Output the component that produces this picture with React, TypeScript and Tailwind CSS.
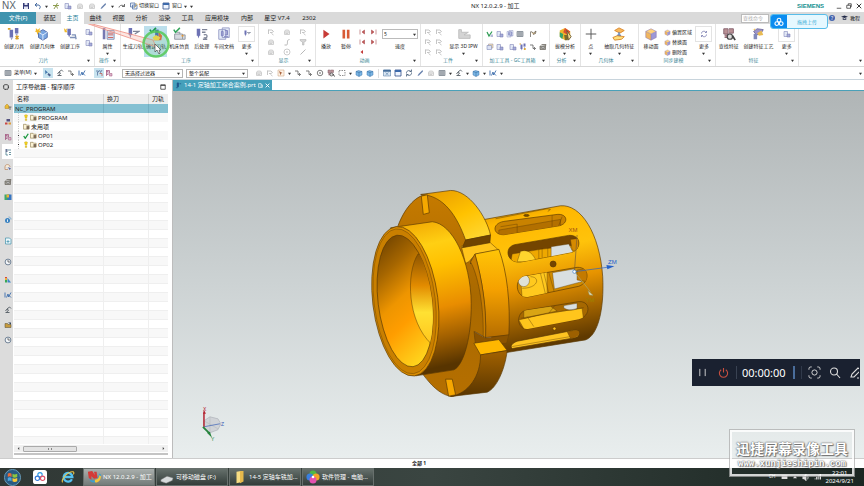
import React from "react";

type IconName = keyof typeof glyphs;

const glyphs = {
  tool: (
    <>
      <path d="M3 3h4v9H3zM9 1h4v6H9z" fill="#6d72b4" />
      <path d="M4 12l1 3 2-3M9 7l2 3 2-3" fill="#9fa2cf" />
      <path d="M1 2l3 0M10 10l3 4M13 10l-3 4" stroke="#d9a22c" strokeWidth="2" />
    </>
  ),
  cube: (
    <>
      <path d="M2 5l6-3 6 3-6 3z" fill="#ffd27a" />
      <path d="M2 5l6 3v7l-6-3z" fill="#f0b65e" />
      <path d="M14 5L8 8v7l6-3z" fill="#9d98d6" />
      <path d="M2 5l6-3 6 3v7l-6 3-6-3zM2 5l6 3 6-3M8 8v7" fill="none" stroke="#8d78ad" strokeWidth=".6" />
    </>
  ),
  geom: (
    <>
      <path d="M4 6l5-3 5 3v6l-5 3-5-3z" fill="#7aa6e0" stroke="#4b67a8" />
      <path d="M4 6l5 3 5-3M9 9v6" fill="none" stroke="#e8f0ff" />
      <path d="M1 1l2 2 3-2-1 3 2 2-3 0-1 3-1-3-2-1 1-1z" fill="#f1b92b" />
    </>
  ),
  op: (
    <>
      <path d="M5 2h4v7H5zM6 9l1 3 1-3" fill="#6d72b4" />
      <path d="M1 1l2 2 2-2-1 3 1 2-3 0z" fill="#f1b92b" />
      <path d="M8 12h6M10 9h4l1 5" stroke="#7e91b8" strokeWidth="1.5" fill="none" />
    </>
  ),
  prop: (
    <>
      <path d="M2 1h3v13H2z" fill="#7679b2" />
      <path d="M7 4h8v10H7z" fill="#dce5f4" stroke="#7c8cae" />
      <path d="M8 7h6M8 9h6M8 12h6" stroke="#c85850" />
    </>
  ),
  gen: (
    <>
      <path d="M3 1h4v8H3zM4 9l1 4 1-4" fill="#6d72b4" />
      <path d="M8 5h7l-5 3" fill="none" stroke="#7f8598" strokeWidth="1.5" />
    </>
  ),
  verify: (
    <>
      <path d="M7 3h4v8H7z" fill="#3f62b5" />
      <path d="M11 5l4 5-1 5H5l3-4 3 1z" fill="#e95b32" />
      <path d="M4 12l4-3 5 3-2 3H6z" fill="#ffd33e" />
      <path d="M1 3l2 3 5-5" fill="none" stroke="#19994b" strokeWidth="2" />
    </>
  ),
  machine: (
    <>
      <path d="M3 8h9v6H3zM5 6h4v2M12 9h3v5h-3" fill="#d6dae0" stroke="#8e949e" />
      <path d="M2 3l2 3 5-5" fill="none" stroke="#35a55c" strokeWidth="1.7" />
      <circle cx="12" cy="10" r="1.2" fill="#e59a3a" />
    </>
  ),
  post: (
    <>
      <path d="M2 2h4v8H2zM3 10l1 3 1-3" fill="#6d72b4" />
      <path d="M8 3h6M8 6h4M10 9c5-2 5 5 0 3M9 14h5" fill="none" stroke="#7f8598" strokeWidth="1.5" />
    </>
  ),
  doc: (
    <>
      <path d="M2 3h8v11H2zM6 1h8v11H6z" fill="#e5ebf8" stroke="#9499c4" />
      <path d="M5 5h2v5H5zM9 4h3v5H9M8 11h5" fill="#a4a7d2" stroke="#7b80be" />
    </>
  ),
  small: (
    <>
      <path d="M2 3h7v10H2z" fill="#e2e8f6" stroke="#8b90be" strokeWidth="1.3" />
      <path d="M8 8h6v6H8z" fill="#a8addb" stroke="#6d72a4" />
    </>
  ),
  ghost: (
    <path d="M3 3v9M3 4h7l3 3-3 2H6M9 11l4 3" fill="none" stroke="#b8b8b8" strokeWidth="1.6" />
  ),
  ghostBox: (
    <path d="M3 7l2-3h6l2 3v6H3zM3 8h10M5 11h5" fill="#ededed" stroke="#bcbcbc" strokeWidth="1.3" />
  ),
  ghostCurve: <path d="M3 14h4c4 0-1-11 6-11" fill="none" stroke="#aaa" strokeWidth="1.7" />,
  ghostCircle: (
    <>
      <circle cx="8" cy="8" r="6" fill="none" stroke="#b0b0b0" strokeWidth="1.3" />
      <circle cx="8" cy="8" r="1.5" fill="#aaa" />
    </>
  ),
  ghostT: <path d="M2 3h12v3l-4 2v6H7V8L3 6z" fill="#d6d6d6" stroke="#aaa" />,
  line: <path d="M3 13L13 3" stroke="#999" strokeWidth="1.4" />,
  play: <path d="M5 3l7 5-7 5z" fill="#c83b36" />,
  pause: <path d="M4 3h3v10H4zM9 3h3v10H9z" fill="#d85a35" />,
  prev: <path d="M4 3v10M13 4L8 8l5 4z" fill="#c65a55" stroke="#a94d52" strokeWidth="1.2" />,
  next: <path d="M12 3v10M3 4l5 4-5 4z" fill="#c65a55" stroke="#a94d52" strokeWidth="1.2" />,
  back: <path d="M10 4L5 8l5 4z" fill="#c23a38" />,
  ipw: <path d="M2 3v10h13V9H8l5-3H5V3z" fill="#d4d4d4" stroke="#bbb" />,
  check: (
    <>
      <path d="M2 4l4 8 6-9" fill="none" stroke="#2c9b53" strokeWidth="2.4" />
      <path d="M9 9h5v5H9" fill="#b6bad8" />
    </>
  ),
  flag: <path d="M3 14V3M4 3l5 3 5-4-1 5-5 2" fill="#e4c691" stroke="#504c45" strokeWidth="1.3" />,
  pages: (
    <>
      <path d="M5 2h9v8H5z" fill="#f6e3b3" stroke="#8f86a4" />
      <path d="M2 5h9v8H2z" fill="#dce2f4" stroke="#6e78ac" />
    </>
  ),
  draft: (
    <>
      <path d="M2 4l6-3 6 4v7l-6 3-6-4z" fill="#efb62d" />
      <path d="M8 1l6 4-3 4-5-3z" fill="#d94f32" />
      <path d="M2 6l4 2-1 6-3-3z" fill="#39a469" />
      <path d="M7 9h6l-2 6H8z" fill="#7a6d2c" />
      <path d="M10 4l2 11 3-4z" fill="#f8df8e" stroke="#665433" />
    </>
  ),
  plus: <path d="M8 2v12M2 8h12" stroke="#555" strokeWidth="1.1" />,
  extract: (
    <>
      <path d="M3 4l5-3 6 3-5 3z" fill="#f8b85b" stroke="#d78327" />
      <path d="M8 6v4M6 9l2 2 2-2" fill="none" stroke="#6089c9" strokeWidth="1.7" />
      <path d="M1 12l5-2 8 1-3 3-8 1z" fill="#ffe07d" stroke="#d78327" />
    </>
  ),
  more: (
    <path d="M3 7c0-5 7-6 9-2M13 9c0 5-7 6-9 2M10 5h3V2M6 11H3v3" fill="none" stroke="#8285b4" strokeWidth="1.8" />
  ),
  find: (
    <>
      <path d="M2 2h5v6H2zM8 2h5v5H8M3 9h5v3H3" fill="#b99094" stroke="#825f6b" />
      <circle cx="9" cy="11" r="3" fill="#ddd" stroke="#4a4a4a" strokeWidth="1.4" />
      <path d="M12 10l3 5" stroke="#444" strokeWidth="2" />
    </>
  ),
  craft: (
    <>
      <path d="M3 5l4-3 7 1-3 5-5 1z" fill="#9b93c9" stroke="#6e699e" />
      <path d="M3 8h4v6H3z" fill="#8189bb" />
      <path d="M7 7l5-3 2 5-5 1z" fill="#e8ba52" />
      <path d="M1 2l2 1 2-2-1 3" fill="#f1b92b" />
    </>
  ),
  save: (
    <>
      <path d="M2 2h12v12H2z" fill="#353b77" />
      <path d="M5 2h6v4H5zM4 9h8v5H4z" fill="#e2e4f2" />
    </>
  ),
  undo: <path d="M6 2L2 6l4 3M3 6h5c6 0 5 7 2 8" fill="none" stroke="#42679d" strokeWidth="2" />,
  cut: <path d="M4 14l7-12M2 7h12M9 8l2 5" stroke="#8b9a4b" strokeWidth="1.9" fill="none" />,
  redo: <path d="M2 11c1-5 7-6 11-2V4M13 9H8" stroke="#555" strokeWidth="1.7" fill="none" />,
  win: (
    <>
      <path d="M2 2h12v12H2z" fill="#eff5ff" stroke="#314e88" strokeWidth="1.6" />
      <path d="M2 2h12v4H2z" fill="#3d6aab" />
    </>
  ),
  switchWin: (
    <>
      <path d="M1 2h9v8H1zM5 6h9v8H5z" fill="#eaf0fa" stroke="#43649b" strokeWidth="1.4" />
      <path d="M11 2l3 3-5 6" stroke="#d3a334" fill="none" strokeWidth="1.5" />
    </>
  ),
  bend: <path d="M2 4h6v7h5M10 8l3 3-3 3" fill="none" stroke="#666" strokeWidth="1.7" />,
  select: (
    <>
      <path d="M2 2l6 5-3 1-2 3z" fill="#4075aa" />
      <path d="M9 8l5 4-3 3-4-4z" fill="#4a5e8b" />
    </>
  ),
  snap: (
    <>
      <path d="M2 4h5v2H5v7M9 2l2 5 3-5" stroke="#5874a0" strokeWidth="1.6" fill="none" />
      <path d="M9 9h5v5" stroke="#ba554b" strokeWidth="1.5" fill="none" />
    </>
  ),
  marquee: <path d="M2 3h12v10H2z" fill="none" stroke="#555" strokeDasharray="3 2" strokeWidth="1.3" />,
  target: (
    <>
      <circle cx="8" cy="8" r="5.5" fill="none" stroke="#4a4a4a" strokeWidth="1.4" />
      <circle cx="8" cy="8" r="1.5" fill="#444" />
    </>
  ),
  box: (
    <>
      <path d="M2 5l5-2 7 2v7l-6 3-6-3z" fill="#7bb6e5" stroke="#3e77ad" />
      <path d="M2 5l6 2v8M8 7l6-2" fill="none" stroke="#2b6095" />
    </>
  ),
  rbox: (
    <>
      <path d="M2 2h12v12H2z" fill="#fff4e8" stroke="#c79971" />
      <path d="M4 4l7 4-3 1-1 4z" fill="#a8633d" />
    </>
  ),
  sync: <path d="M3 9c-1-5 5-8 9-4M13 7c1 5-5 8-9 4M9 5h4V1M7 11H3v4" fill="none" stroke="#3d5773" strokeWidth="1.6" />,
  fit: (
    <>
      <path d="M1 2h14v12H1z" fill="#dae7f4" stroke="#456e9b" />
      <path d="M1 2h14v3H1zM5 7l6 5M11 7l-6 5" fill="#456e9b" stroke="#456e9b" />
    </>
  ),
  pencil: <path d="M3 14l2-4 8-8 1 3-8 8z" fill="#6882ad" />,
  table: (
    <path d="M2 3h12v10H2zM2 6h12M6 3v10M10 3v10M2 10h12" fill="#eef1f4" stroke="#5a6570" strokeWidth="1.2" />
  ),
  gear: (
    <circle cx="8" cy="8" r="5" fill="none" stroke="#444" strokeWidth="2.4" strokeDasharray="3 .9" />
  ),
  asm: (
    <>
      <path d="M2 6l4-4 4 4v5H2z" fill="#ebbc37" stroke="#b18727" />
      <path d="M9 8h6M12 8v6" stroke="#555" strokeWidth="1.5" />
    </>
  ),
  constraint: (
    <>
      <path d="M5 2h7v5H5z" fill="#53517f" />
      <path d="M2 9h5v4H2z" fill="#c94844" />
      <path d="M9 9h5v4H9z" fill="#dd9d3b" />
    </>
  ),
  partNav: (
    <>
      <path d="M3 2v12M3 5h4M3 11h4M3 3h6v5H3" fill="none" stroke="#a0527c" strokeWidth="1.5" />
      <path d="M9 9h5v5H9z" fill="#dbb4c9" stroke="#a0527c" />
    </>
  ),
  opNav: (
    <>
      <path d="M3 2h4v6H3z" fill="#687796" />
      <path d="M4 8v6h4M8 4h6M10 9h4M10 13h4" fill="none" stroke="#3f7586" strokeWidth="1.5" />
    </>
  ),
  part: (
    <path d="M5 2h3v9H5zM2 13h5M10 4h4" fill="#1d4f86" stroke="#1d4f86" strokeWidth="1.5" />
  ),
  reuse: (
    <>
      <path d="M2 8c0-7 10-6 10 0M2 8v5h6" fill="#f8ecd9" stroke="#b5835e" strokeWidth="1.4" />
      <path d="M8 8l6 3-3 3z" fill="#5565a4" />
    </>
  ),
  camera: (
    <>
      <path d="M2 6h11v7H2zM5 3h9l-1 3" fill="#a2a09a" stroke="#625d55" strokeWidth="1.3" />
      <circle cx="8" cy="9" r="2" fill="#eee" stroke="#444" />
    </>
  ),
  hd: (
    <>
      <path d="M1 3h10v11H1z" fill="#3fa96a" />
      <path d="M7 3h8v11H7z" fill="#3775c1" />
      <path d="M5 3h5v6H5z" fill="#edb33b" />
    </>
  ),
  web: (
    <>
      <circle cx="7" cy="9" r="5" fill="#3982c1" />
      <path d="M6 8h1v4M7 6v1" stroke="#fff" strokeWidth="1.6" />
      <path d="M9 2c3 0 5 2 5 5" fill="none" stroke="#5696c9" strokeWidth="1.4" />
    </>
  ),
  history: (
    <>
      <path d="M3 2h8l3 3v9H3z" fill="#eaf7fb" stroke="#348aa5" strokeWidth="1.3" />
      <path d="M8 6v6M5 9h6" stroke="#348aa5" strokeWidth="1.3" />
    </>
  ),
  clock: (
    <>
      <circle cx="8" cy="8" r="5.8" fill="#f4f7fa" stroke="#52677f" strokeWidth="1.6" />
      <path d="M8 4v4h4" fill="none" stroke="#333" strokeWidth="1.3" />
    </>
  ),
  palette: (
    <>
      <path d="M2 2h4v3H2z" fill="#d84735" />
      <path d="M2 5h4v3H2z" fill="#f1b92b" />
      <path d="M2 8h4v5H2z" fill="#38a754" />
      <path d="M7 4l7 9H7z" fill="#3f86c7" />
    </>
  ),
  wk: <path d="M2 3v10M5 13l3-7 1 6 5-9M9 8l5 5" fill="none" stroke="#3b6cab" strokeWidth="1.8" />,
  robot: <path d="M3 13h8M5 13l4-5-3-2 5-4 3 3M6 6l-3 4" fill="none" stroke="#515a62" strokeWidth="1.8" />,
  folder: (
    <>
      <path d="M2 5h5l1 2h6v6H2z" fill="#c69b3e" stroke="#554a2f" />
      <path d="M8 3h6v4" fill="#32435b" />
    </>
  ),
  prog: (
    <>
      <path d="M1 3h6l1 2h6v9H1z" fill="#fbf2d4" stroke="#8c7a4c" strokeWidth="1.4" />
      <path d="M8 7h6v7H8z" fill="#7d6b58" />
    </>
  ),
};

function Ico({ n, className = "size-2" }: { n: IconName; className?: string }) {
  return (
    <svg viewBox="0 0 16 16" aria-hidden="true" fill="none" className={`shrink-0 ${className}`}>
      {glyphs[n]}
    </svg>
  );
}

function Caret({ className = "" }: { className?: string }) {
  return (
    <svg viewBox="0 0 4 4" aria-hidden="true" className={`size-[3px] shrink-0 ${className}`}>
      <path d="M0 1h4L2 4z" fill="#333" />
    </svg>
  );
}

function Group({ title, w, children }: { title: string; w: string; children: React.ReactNode }) {
  return (
    <section className={`flex shrink-0 flex-col border-r border-[#e4e4e4] ${w}`}>
      <div className="flex h-[31px] items-start justify-around pt-[2px]">{children}</div>
      <div className="flex h-[11px] items-center pr-[4px] text-[#3c8797]">
        <span className="flex-1 text-center">{title}</span>
        <Caret />
      </div>
    </section>
  );
}

function Big({ n, label, drop, w = "", framed }: { n: IconName; label: string; drop?: boolean; w?: string; framed?: boolean }) {
  return (
    <button className={`flex shrink-0 flex-col items-center whitespace-nowrap ${w}`}>
      <span className={`flex h-[16px] items-center justify-center ${framed ? "w-[17px] border border-[#e3e3e3]" : ""}`}>
        <Ico n={n} className={framed ? "size-2" : "size-[14px]"} />
      </span>
      <span className="h-[9px] leading-[9px]">{label}</span>
      {drop && <Caret className="mt-[1px]" />}
    </button>
  );
}

function Minis({ icons, cols, gap = "gap-x-[6px] gap-y-[3px]" }: { icons: IconName[]; cols: string; gap?: string }) {
  return (
    <div className={`grid ${cols} ${gap} pt-[2px]`}>
      {icons.map((n, i) => (
        <button key={i}>
          <Ico n={n} />
        </button>
      ))}
    </div>
  );
}

function TitleBar() {
  const quick: (IconName | "v")[] = ["save", "undo", "v", "cut", "small", "ghostBox", "ghostBox", "pencil", "v", "redo"];
  return (
    <header className="flex h-3 shrink-0 items-center bg-white px-[2px] text-[6px]">
      <span className="mr-[6px] font-['Liberation_Sans'] text-[10px] leading-[12px] text-[#5a646c]">NX</span>
      <div className="flex w-[108px] items-center justify-between pr-[4px]">
        {quick.map((q, i) => (q === "v" ? <Caret key={i} /> : <button key={i}><Ico n={q} /></button>))}
      </div>
      <button className="flex items-center gap-[1px] text-[5px]"><Ico n="switchWin" />切换窗口</button>
      <button className="ml-[3px] flex items-center gap-[2px] text-[5px]"><Ico n="win" />窗口<Caret /></button>
      <Caret className="ml-[3px]" />
      <h1 className="ml-[278px] whitespace-nowrap">NX 12.0.2.9 - 加工</h1>
      <div className="flex flex-1 items-center justify-end gap-[4px] text-[#333]">
        <span className="mr-[8px] font-['Liberation_Sans'] text-[6px] font-bold text-[#159090]">SIEMENS</span>
        <button aria-label="最小化"><svg viewBox="0 0 8 8" className="size-[6px]"><path d="M1 7h6" stroke="#333" /></svg></button>
        <button aria-label="还原"><svg viewBox="0 0 8 8" className="size-[6px]"><path d="M1 3h5v4H1zM3 3V1h4v4H6" fill="none" stroke="#333" /></svg></button>
        <button aria-label="关闭"><svg viewBox="0 0 8 8" className="size-[6px]"><path d="M1 1l6 6M7 1L1 7" stroke="#333" strokeWidth="1.3" /></svg></button>
      </div>
    </header>
  );
}

function TabBar() {
  const tabs = ["装配", "主页", "曲线", "视图", "分析", "渲染", "工具"];
  return (
    <nav className="relative z-10 flex h-3 shrink-0 items-stretch bg-[#dadada] text-[6px] leading-3">
      <button className="mr-[2px] w-9 bg-[#3f93ae] text-white">文件(F)</button>
      {tabs.map((t) => (
        <button key={t} className={t === "主页" ? "w-[23px] bg-white text-[#2a7f99]" : "w-[23px]"}>{t}</button>
      ))}
      <button className="w-9">应用模块</button>
      <button className="w-6">内部</button>
      <button className="w-9 whitespace-nowrap">星空 V7.4</button>
      <button className="w-7">2302</button>
      <div className="relative flex flex-1 items-center justify-end gap-[6px] pr-[4px]">
        <input aria-label="查找命令" placeholder="查找命令" className="mr-[54px] h-[9px] w-[28px] border border-[#bbb] bg-white px-[1px] text-[5px] placeholder:text-[#aaa]" />
        <button className="absolute right-[36px] top-[2px] flex h-[15px] w-[58px] items-center overflow-hidden rounded-[3px] border border-[#58bde9] bg-[#e6f8ff] text-[#3eacd5]">
          <span className="flex h-full w-[16px] items-center justify-center bg-[#0a8cf0]">
            <svg viewBox="0 0 16 16" className="size-[10px]" fill="none" stroke="#fff" strokeWidth="1.8"><circle cx="8" cy="5" r="3" /><circle cx="4.500" cy="10.500" r="3" /><circle cx="11.500" cy="10.500" r="3" /></svg>
          </span>
          <span className="flex-1 text-center text-[5px]">拖拽上传</span>
        </button>
        <button aria-label="帮助" className="flex size-[6px] items-center justify-center rounded-full bg-[#4263ae] text-[5px] text-white">?</button>
        <button className="flex items-center gap-[2px] text-[5px]">
          <svg viewBox="0 0 16 12" className="w-[7px]"><path d="M0 4l8-3 8 3-8 3zM4 7v4h8V7l-4 2z" fill="#222b49" /></svg>教程
        </button>
      </div>
    </nav>
  );
}

function Ribbon() {
  return (
    <div className="relative flex h-[43px] shrink-0 border-b border-[#d8d8d8] bg-white text-[5px] leading-[7px]">
      <Group title="刀片" w="w-[95px]">
        <Big n="tool" label="创建刀具" w="w-[26px]" />
        <Big n="geom" label="创建几何体" w="w-[26px]" />
        <Big n="op" label="创建工序" w="w-[25px]" />
        <Minis icons={["small", "small"]} cols="grid-cols-1" />
      </Group>
      <Group title="操作" w="w-[26px]"><Big n="prop" label="属性" drop /></Group>
      <Group title="工序" w="w-[138px]">
        <Big n="gen" label="生成刀轨" w="w-[23px]" />
        <div className="h-[31px] bg-[#bcdfec]"><Big n="verify" label="确认刀轨" w="w-[23px]" /></div>
        <Big n="machine" label="机床仿真" w="w-[23px]" />
        <Big n="post" label="后处理" w="w-[21px]" />
        <Big n="doc" label="车间文档" w="w-[23px]" />
        <Big n="gen" label="更多" drop framed w="w-[22px]" />
      </Group>
      <Group title="显示" w="w-[57px]">
        <Minis icons={["ghost", "ghostBox", "ghost", "ghostBox", "ghostCurve", "ghostT", "ghostBox", "ghostCircle", "line"]} cols="grid-cols-3" gap="gap-x-[8px] gap-y-[2px]" />
      </Group>
      <Group title="动画" w="w-[105px]">
        <Big n="play" label="播放" w="w-[16px]" />
        <Big n="pause" label="暂停" w="w-[16px]" />
        <Minis icons={["prev", "next", "prev", "next", "back"]} cols="grid-cols-2" gap="gap-x-[4px] gap-y-[2px]" />
        <label className="flex flex-col items-center gap-[4px] pt-[3px]">
          <span className="relative flex items-center">
            <select className="h-[10px] w-[36px] appearance-none border border-[#bbb] bg-white px-[1px]"><option>5</option></select>
            <Caret className="absolute right-[2px]" />
          </span>
          速度
        </label>
      </Group>
      <Group title="工件" w="w-[62px]">
        <Minis icons={["ghost", "ghost", "ghost", "ghost", "ghost", "ghost"]} cols="grid-cols-2" gap="gap-x-[3px] gap-y-[2px]" />
        <Big n="ipw" label="显示 3D IPW" drop w="w-[32px]" />
      </Group>
      <Group title="加工工具 - GC工具箱" w="w-[67px]">
        <div className="flex flex-col gap-[5px] pt-[4px]">
          <div className="flex gap-[2px]"><Ico n="check" /><Ico n="small" /><Ico n="doc" /><Ico n="table" /><span className="w-[1px]" /><Ico n="flag" /></div>
          <div className="flex gap-[2px]"><Ico n="pages" /><Ico n="small" /><span className="w-[1px]" /><Ico n="small" /><Ico n="tool" /><Ico n="bend" /><Ico n="camera" /></div>
        </div>
      </Group>
      <Group title="分析" w="w-[31px]"><Big n="draft" label="拔模分析" drop /></Group>
      <Group title="几何体" w="w-[58px]">
        <Big n="plus" label="点" drop w="w-[16px]" />
        <Big n="extract" label="抽取几何特征" drop w="w-[34px]" />
      </Group>
      <Group title="同步建模" w="w-[77px]">
        <Big n="cube" label="移动面" w="w-[22px]" />
        <div className="flex flex-col gap-[2px] pt-[2px]">
          {["偏置区域", "替换面", "删除面"].map((t) => (
            <button key={t} className="flex h-[8px] items-center gap-[1px] whitespace-nowrap"><Ico n="cube" className="size-[7px]" />{t}</button>
          ))}
        </div>
        <Big n="more" label="更多" drop framed w="w-[20px]" />
      </Group>
      <Group title="特征" w="w-[83px]">
        <Big n="find" label="查找特征" w="w-[23px]" />
        <Big n="craft" label="创建特征工艺" w="w-[32px]" />
        <Big n="small" label="更多" drop framed w="w-[20px]" />
      </Group>
      <div className="flex flex-1 items-end justify-end pb-[4px] pr-[2px]"><Caret /></div>
      {/* click highlight and pointer trail */}
      <svg viewBox="0 0 110 46" className="pointer-events-none absolute -top-[6px] left-[72px] h-[46px] w-[110px]">
        <path d="M5 2L81 22 84 29z" fill="#f7b8ad" fillOpacity=".35" stroke="#ee8c7f" strokeWidth=".8" />
        <circle cx="84" cy="26" r="12.500" fill="#7fd38a" fillOpacity=".2" stroke="#55c956" strokeWidth="2.500" strokeOpacity=".85" />
        <path d="M83 26v8l2-2 2 4 1-1-1-3h2z" fill="#fff" stroke="#333" strokeWidth=".6" />
      </svg>
    </div>
  );
}

function Combo({ text, label, w }: { text: string; label: string; w: string }) {
  return (
    <span className={`relative flex items-center ${w}`}>
      <select aria-label={label} className="h-[9px] w-full appearance-none border border-[#b5b5b5] bg-white px-[2px] leading-[7px]"><option>{text}</option></select>
      <Caret className="absolute right-[3px]" />
    </span>
  );
}

function SelectionBar() {
  const tools: (IconName | "v" | "|")[] = ["ghostBox", "ghost", "rbox", "v", "bend", "bend", "target", "find", "marquee", "v", "box", "box", "|", "fit", "win", "sync", "pencil", "ghostBox", "table", "v", "robot", "v", "box", "v", "wk", "v"];
  return (
    <div className="flex h-[13px] shrink-0 items-center border-b border-[#c8d4dc] bg-white pl-[4px] text-[5px]">
      <button className="mr-[6px] flex w-[33px] items-center gap-[2px] whitespace-nowrap"><Ico n="table" />菜单(M)<Caret /></button>
      <button className="mr-[3px] bg-[#c7e3ef] p-[1px]"><Ico n="select" /></button>
      <div className="flex gap-[3px]"><Ico n="robot" /><Ico n="bend" /><Ico n="wk" /></div>
      <button className="ml-[8px] mr-[1px] bg-[#c7e3ef] p-[1px]"><Ico n="snap" /></button>
      <Ico n="partNav" />
      <div className="ml-[9px] mr-[7px] flex gap-[3px]">
        <Combo label="类型过滤器" text="无选择过滤器" w="w-[61px]" />
        <Combo label="选择范围" text="整个装配" w="w-[62px]" />
      </div>
      <div className="flex w-[248px] items-center justify-between">
        {tools.map((t, i) =>
          t === "v" ? <Caret key={i} /> : t === "|" ? <span key={i} className="mx-[1px] h-[9px] w-px bg-[#ddd]" /> : <button key={i}><Ico n={t} /></button>
        )}
      </div>
      <div className="flex flex-1 justify-end pr-[2px]"><Caret /></div>
    </div>
  );
}

function ResourceBar() {
  const first: IconName[] = ["asm", "constraint", "partNav", "opNav", "reuse", "camera", "hd"];
  const mid: IconName[] = ["web", "history", "clock"];
  const last: IconName[] = ["palette", "wk", "robot", "folder", "clock"];
  return (
    <aside className="flex w-[13px] shrink-0 flex-col items-stretch bg-[#dcdcdc]">
      <button className="mb-[5px] flex h-[14px] items-center justify-center pr-[2px]"><Ico n="gear" /></button>
      {first.map((n) => (
        <button key={n} className={n === "opNav" ? "ml-[2px] flex h-[15px] items-center justify-center bg-white" : "ml-[2px] flex h-[15px] items-center justify-center"}><Ico n={n} /></button>
      ))}
      <div className="mt-[5px]">
        {mid.map((n) => <button key={n} className="flex h-[21px] w-full items-center justify-center pl-[2px]"><Ico n={n} /></button>)}
      </div>
      {last.map((n) => <button key={n} className="ml-[2px] flex h-[15px] items-center justify-center"><Ico n={n} /></button>)}
    </aside>
  );
}

function Mark({ kind }: { kind: string }) {
  if (kind === "ok") return <svg viewBox="0 0 8 8" className="size-[6px]"><path d="M1 4l2 3 4-6" fill="none" stroke="#1c9940" strokeWidth="1.8" /></svg>;
  if (kind === "warn") return <svg viewBox="0 0 8 8" className="size-[7px]"><path d="M2 1c0-1 4-1 4 0L5 5H3zM3 6h2v2H3z" fill="#f2d21f" stroke="#b39111" strokeWidth=".4" /></svg>;
  return null;
}

const treeRows = [
  { name: "NC_PROGRAM", mark: "root", open: false },
  { name: "PROGRAM", mark: "warn", open: false },
  { name: "未用项", mark: "", open: false },
  { name: "OP01", mark: "ok", open: true },
  { name: "OP02", mark: "warn", open: true },
];

function Navigator() {
  const blank = Array.from({ length: 34 }, (_, i) => i);
  return (
    <section className="flex w-[160px] shrink-0 flex-col border-r border-[#bcbcbc] bg-white pl-[1px] pr-[4px] text-[6px]">
      <div className="flex h-[14px] shrink-0 items-center justify-between pl-[2px] pr-[2px]">
        <h2>工序导航器 - 程序顺序</h2>
        <svg viewBox="0 0 8 8" className="size-[6px]"><path d="M1 1h6v6H1zM1 2h6" fill="none" stroke="#333" /></svg>
      </div>
      <div className="min-h-0 flex-1 overflow-hidden">
        <table className="w-full table-fixed border-separate border-spacing-0 text-left leading-[8px]">
          <thead>
            <tr className="h-[10px] bg-[#efefef]">
              <th className="border-r border-[#d5d5d5] p-0 pl-[3px] font-normal">名称</th>
              <th className="w-[45px] border-r border-[#d5d5d5] p-0 pl-[3px] font-normal">换刀</th>
              <th className="w-[19px] p-0 pl-[3px] font-normal">刀轨</th>
            </tr>
          </thead>
          <tbody>
            {treeRows.map((r, i) => (
              <tr key={r.name} className={i === 0 ? "h-[9px] bg-[#84c0d2]" : i % 2 ? "h-[9px] bg-[#f8f8f8]" : "h-[9px]"}>
                <td className={i === 0 ? "border-r border-[#74afc2] p-0 pl-[1px]" : "border-r border-[#ececec] p-0 pl-[4px]"}>
                  {i === 0 ? r.name : (
                    <span className="flex h-[9px] items-center gap-[1px]">
                      <span className="flex h-full w-[4px] items-center border-l border-dotted border-[#ccc]">{r.open && <span className="-ml-[1px] size-[1px] bg-[#333]" />}</span>
                      {r.mark && <span className="flex w-[6px] justify-center"><Mark kind={r.mark} /></span>}
                      <Ico n="prog" className="size-[7px]" />
                      <span>{r.name}</span>
                    </span>
                  )}
                </td>
                <td className={i === 0 ? "border-r border-[#74afc2] p-0" : "border-r border-[#ececec] p-0"} />
                <td className="p-0" />
              </tr>
            ))}
            {blank.map((i) => (
              <tr key={i} className={i % 2 ? "h-[9px]" : "h-[9px] bg-[#f8f8f8]"}>
                <td className="border-b border-r border-[#efefef] p-0" />
                <td className="border-b border-r border-[#efefef] p-0" />
                <td className="border-b border-[#efefef] p-0" />
              </tr>
            ))}
          </tbody>
        </table>
      </div>
      <div className="mt-[1px] flex h-[7px] shrink-0 items-center gap-[3px] bg-[#f0f0f0] px-[3px]">
        <svg viewBox="0 0 4 4" className="size-[3px]"><path d="M3 0v4L1 2z" fill="#444" /></svg>
        <div className="flex h-[6px] w-[54px] items-center justify-center rounded-[1px] border border-[#aaa] bg-[#e3e3e3]"><span className="h-[2px] w-[4px] border-x border-[#888]" /></div>
        <span className="flex-1" />
        <svg viewBox="0 0 4 4" className="size-[3px]"><path d="M1 0v4l2-2z" fill="#444" /></svg>
      </div>
      <div className="mb-[3px] mt-[1px] h-[2px] shrink-0 bg-[#c4c4c4]" />
    </section>
  );
}

/* Flanged sleeve with a slotted cage, drawn at three units per pixel */
function Model() {
  const slots = [
    "M430 124L590 103C622 100 625 130 597 137L430 164C396 165 393 130 430 124Z",
    "M462 194L625 166C663 163 665 208 633 217L480 246C438 250 430 202 462 194Z",
    "M492 289L650 262C688 260 690 307 655 319L502 351C464 354 460 296 492 289Z",
    "M497 391L655 365C692 362 692 409 655 418L502 447C468 450 465 397 497 391Z",
    "M470 484L640 451C662 448 662 469 640 474L455 506C448 498 455 490 470 484Z",
  ];
  return (
    <g transform="translate(360 180) scale(.33333)" stroke="#5b3a05" strokeWidth="2" strokeLinejoin="round">
      <defs>
        <linearGradient id="cage" x1="0" y1="0" x2=".18" y2="1">
          <stop offset="0" stopColor="#d58a00" /><stop offset=".15" stopColor="#ffb800" /><stop offset=".38" stopColor="#ffc30b" />
          <stop offset=".6" stopColor="#e69300" /><stop offset=".82" stopColor="#9c6000" /><stop offset="1" stopColor="#5f3900" />
        </linearGradient>
        <linearGradient id="hub" x1="0" y1="0" x2=".12" y2="1">
          <stop offset="0" stopColor="#f0a200" /><stop offset=".2" stopColor="#ffcf13" /><stop offset=".35" stopColor="#ffc000" />
          <stop offset=".62" stopColor="#e98d00" /><stop offset=".82" stopColor="#a05f00" /><stop offset="1" stopColor="#573400" />
        </linearGradient>
        <linearGradient id="bore" x1=".2" y1="0" x2=".5" y2="1">
          <stop offset="0" stopColor="#6d4100" /><stop offset=".25" stopColor="#a66600" /><stop offset=".5" stopColor="#ee9500" />
          <stop offset=".68" stopColor="#ff9d00" /><stop offset="1" stopColor="#ffd21c" />
        </linearGradient>
        <linearGradient id="deep" x1="0" y1="0" x2="0" y2="1">
          <stop offset="0" stopColor="#8e5500" /><stop offset=".35" stopColor="#e28b00" /><stop offset=".65" stopColor="#ffe133" /><stop offset="1" stopColor="#ffc51c" />
        </linearGradient>
        <linearGradient id="face" x1="0" y1="0" x2="0" y2="1">
          <stop offset="0" stopColor="#c57a00" /><stop offset=".5" stopColor="#a96900" /><stop offset="1" stopColor="#b56f00" />
        </linearGradient>
        <linearGradient id="rim" x1="0" y1="0" x2=".7" y2="1">
          <stop offset="0" stopColor="#e69800" /><stop offset=".6" stopColor="#ffc200" /><stop offset="1" stopColor="#ffd52c" />
        </linearGradient>
        <linearGradient id="block" x1="0" y1="0" x2="0" y2="1">
          <stop offset="0" stopColor="#ffc507" /><stop offset=".45" stopColor="#f5a100" /><stop offset="1" stopColor="#b56d00" />
        </linearGradient>
        <linearGradient id="low" x1="0" y1="0" x2="0" y2="1">
          <stop offset="0" stopColor="#a36200" /><stop offset="1" stopColor="#583500" />
        </linearGradient>
        <clipPath id="boreEdge"><ellipse cx="133" cy="363" rx="81" ry="199" transform="rotate(-7 133 363)" /></clipPath>
        {slots.map((d, i) => <clipPath key={i} id={`slot${i}`}><path d={d} /></clipPath>)}
      </defs>

      <path d="M350 122L600 77C662 72 718 160 727 290C732 390 712 468 675 480L400 524Z" fill="url(#cage)" />
      <path d="M405 116L560 86L570 88L562 94" fill="none" strokeWidth="1.500" />
      {slots.map((d, i) => <path key={i} d={d} fill={["#c98200", "#744500", "#d18b00", "#a66800", "#ffc421"][i]} />)}
      <g clipPath="url(#slot0)" strokeWidth="1.200"><path d="M415 150L600 118V170H415Z" fill="#b37000" /><path d="M420 140L470 132V170M575 105V150M605 110L590 150" fill="none" /></g>
      <g clipPath="url(#slot1)" strokeWidth="1.200">
        <path d="M455 222L540 208L650 195V250H450Z" fill="#eea800" /><path d="M480 214C505 205 520 225 528 245H470Z" fill="#ffd52d" />
        <path d="M572 200L625 192L640 220L572 235Z" fill="#d9dfe0" /><path d="M545 205V240M562 203V240M535 208V240" fill="none" /><path d="M630 178L655 175V215L635 210Z" fill="#d68a00" />
      </g>
      <g clipPath="url(#slot2)" strokeWidth="1.200">
        <path d="M480 290L560 275V345L485 355Z" fill="#ffc91e" /><ellipse cx="490" cy="302" rx="17" ry="18" fill="#dfe1d6" /><path d="M510 290C540 290 535 325 485 325" fill="none" />
        <path d="M576 278L640 267L664 305L582 327Z" fill="#d9dfe1" /><path d="M540 280L555 342M550 278L565 340M565 277L582 338" fill="none" /><path d="M650 270L680 265V305L650 300Z" fill="#c47a00" />
      </g>
      <g clipPath="url(#slot3)" strokeWidth="1.200">
        <path d="M475 420L560 400L665 385L670 425L495 455Z" fill="#ffc51c" /><path d="M490 390L570 379L590 393L490 415Z" fill="#d9a414" /><path d="M610 377L650 370V386C635 394 620 390 610 384Z" fill="#d9dfe1" />
        <path d="M500 410L520 440M565 400L582 378M480 415L670 383" fill="none" />
      </g>
      <g clipPath="url(#slot4)" strokeWidth="1.200"><path d="M455 500L630 470L640 453" fill="none" /><path d="M620 455L660 448V475L630 475Z" fill="#9d6000" /></g>
      <circle cx="578" cy="252" r="9" fill="#754500" /><circle cx="582" cy="446" r="5" fill="#ffbd17" /><ellipse cx="498" cy="106" rx="8" ry="3" fill="#795000" />

      <path d="M112 137C130 90 160 48 200 42C280 42 325 110 345 185L330 252L343 222C365 300 380 390 375 473L342 455L345 490L370 525C355 595 320 648 270 650C235 642 210 614 188 585Z" fill="url(#face)" />
      <path d="M302 198L385 184L414 210L345 222L325 245L315 250Z" fill="#ffc41b" strokeWidth="1.500" />
      <path d="M180 43L270 31C325 30 378 110 390 165L315 180C290 110 250 45 180 43Z" fill="url(#rim)" />
      <path d="M315 180L390 165L388 188L305 203Z" fill="#704400" />
      <path d="M343 222L415 208C440 275 450 370 445 465L375 473C378 380 365 300 343 222Z" fill="url(#block)" />
      <path d="M343 222C365 300 378 380 375 473L368 470C370 370 350 280 330 246Z" fill="#c77c00" strokeWidth="1.500" />
      <path d="M340 455L375 474L445 465L438 490L345 492Z" fill="#8b5300" strokeWidth="1" />
      <path d="M340 490L415 479L440 512L360 525Z" fill="#ffb700" />
      <path d="M360 525L440 512C433 570 408 625 380 637L270 650C325 640 360 588 360 525Z" fill="url(#low)" />
      <path d="M182 48L200 44L206 98L188 103Z" fill="#f5a800" /><path d="M255 598L275 598L285 645L264 649Z" fill="#f7a700" />

      <path d="M90 143L215 125C275 130 330 240 332 370C333 470 310 555 280 570L165 588Z" fill="url(#hub)" />
      <ellipse cx="134" cy="364" rx="98" ry="226" transform="rotate(-7 134 364)" fill="#d98c00" />
      <ellipse cx="132" cy="364" rx="92" ry="219" transform="rotate(-7 132 364)" fill="#c97f00" strokeWidth="1.200" />
      <ellipse cx="133" cy="363" rx="81" ry="199" transform="rotate(-7 133 363)" fill="url(#bore)" />
      <g clipPath="url(#boreEdge)"><path d="M172 222C135 280 140 425 212 492L260 487V222Z" fill="url(#deep)" strokeWidth="1.500" /></g>

      <g fill="none" strokeWidth="2">
        <path d="M642 275L650 165" stroke="#765b35" /><path d="M642 275L740 262" stroke="#2460c9" /><path d="M738 255L762 259L741 268Z" fill="#2460c9" stroke="none" />
        <path d="M642 275L690 335" stroke="#a8a774" /><path d="M683 332L698 346L687 345Z" fill="#e9e5c6" stroke="#9a945a" /><circle cx="642" cy="275" r="5" fill="#fff" stroke="#3579c9" />
      </g>
      <g stroke="none" fontSize="18" fontFamily="Liberation Sans, sans-serif"><text x="624" y="156" fill="#a55214">XM</text><text x="743" y="251" fill="#2460c9">ZM</text><text x="675" y="366" fill="#9a8200">YM</text></g>
    </g>
  );
}

function Viewport() {
  return (
    <main className="relative flex min-w-0 flex-1 flex-col">
      <div className="flex h-[10px] shrink-0 bg-white text-[6px] leading-[10px]">
        <button className="flex items-center gap-[2px] whitespace-nowrap bg-[#45a0bb] px-[2px] text-white">
          <Ico n="part" className="size-[7px]" />14-1 定轴加工综合案例.prt
          <svg viewBox="0 0 8 8" className="size-[5px]"><path d="M1 1h4v6H1zM5 3h2v4H5" fill="none" stroke="#fff" /></svg>
          <svg viewBox="0 0 8 8" className="size-[5px]"><path d="M1 1l6 6M7 1L1 7" stroke="#fff" strokeWidth="1.500" /></svg>
        </button>
      </div>
      <div className="min-h-0 flex-1 border-t border-[#4aa0b8] bg-linear-to-b from-[#b0b5b6] via-[#cbd1d2] to-[#e9eeee]">
        <svg viewBox="172 91 692 367" className="h-full w-full" role="img" aria-label="零件三维模型">
          <Model />
          <path d="M203 421l6-4 8 2 3 5-3 6-8 3-6-4z" fill="#d0d3d7" stroke="#9da2aa" strokeWidth=".5" /><path d="M209 417v16M203 421l14 8" stroke="#b0b4bb" strokeWidth=".5" />
          <path d="M203 427L219 424" stroke="#3960b5" strokeWidth=".7" /><path d="M203 427V413" stroke="#b42331" strokeWidth="1.500" /><path d="M202 414l1-4 2 4z" fill="#b42331" /><path d="M202 427l6 6" stroke="#25833c" strokeWidth="1.800" /><path d="M206 433l5 5-2-6z" fill="#25833c" />
          <g fontSize="5" fontFamily="Liberation Sans, sans-serif"><text x="202" y="411" fill="#b42331">X</text><text x="220" y="426" fill="#3960b5">Z</text><text x="210" y="441" fill="#25833c">Y</text></g>
        </svg>
      </div>
      <div className="absolute bottom-[72px] right-[4px] flex h-[27px] w-[168px] items-center bg-[#1a2130] pl-[6px] text-white">
        <button aria-label="暂停录制"><svg viewBox="0 0 10 10" className="size-[9px]"><path d="M2 1v8M8 1v8" stroke="#ddd" /></svg></button>
        <button aria-label="停止录制" className="ml-[11px]"><svg viewBox="0 0 12 12" className="size-[11px]" fill="none" stroke="#c84f40" strokeWidth="1.200"><path d="M3.500 3a4.500 4.500 0 1 0 5 0M6 1v5" /></svg></button>
        <span className="ml-[7px] h-[13px] w-px bg-[#394252]" />
        <time className="ml-[5px] text-[11px] leading-[27px]">00:00:00</time>
        <span className="ml-[7px] h-[13px] w-[2px] bg-[#4a6d9b]" />
        <span className="ml-[6px] h-[13px] w-px bg-[#30394a]" />
        <button aria-label="截图" className="ml-[6px]"><svg viewBox="0 0 14 14" className="size-[13px]" fill="none" stroke="#ddd"><path d="M1 4V3q0-2 2-2h1M10 1h1q2 0 2 2v1M13 10v1q0 2-2 2h-1M4 13H3q-2 0-2-2v-1" /><circle cx="7" cy="7" r="2.800" /></svg></button>
        <button aria-label="缩放" className="ml-[8px]"><svg viewBox="0 0 12 12" className="size-[12px]" fill="none" stroke="#ddd" strokeWidth="1.100"><circle cx="5" cy="4.500" r="3.500" /><path d="M7.500 7L11 11" /></svg></button>
        <button aria-label="画笔" className="ml-[9px] w-[9px] overflow-hidden"><svg viewBox="0 0 12 12" className="size-[12px] max-w-none" fill="none" stroke="#ddd" strokeWidth="1.100"><path d="M1 10L2 7l6-6 3 2-7 7zM7 11h5" /></svg></button>
      </div>
    </main>
  );
}

function TaskButton({ label, active, children }: { label: string; active?: boolean; children: React.ReactNode }) {
  return (
    <button className={`mr-[1px] flex h-full w-[72px] items-center gap-[2px] overflow-hidden whitespace-nowrap border border-[#68706d] px-[3px] text-white ${active ? "bg-linear-to-b from-[#aab0ae] to-[#747b79]" : "bg-linear-to-b from-[#66706c] to-[#333d3a]"}`}>
      {children}
      <span>{label}</span>
    </button>
  );
}

function Taskbar() {
  return (
    <footer className="flex h-[18px] shrink-0 items-center bg-linear-to-r from-[#303835] via-[#3a4541] to-[#1b2622] text-[6px]">
      <button aria-label="开始" className="ml-[4px]">
        <svg viewBox="0 0 18 18" className="size-[17px]"><circle cx="9" cy="9" r="8.500" fill="#285a82" stroke="#6aa0be" /><path d="M4 5q2-1.500 4 0v3.500q-2-1.500-4 0z" fill="#e86b37" /><path d="M9 5q2 1.500 5 0v3.500q-3 1.500-5 0z" fill="#8cc63f" /><path d="M4 9.500q2-1.500 4 0V13q-2-1.500-4 0z" fill="#4da7df" /><path d="M9 9.500q2 1.500 5 0V13q-3 1.500-5 0z" fill="#f8c838" /></svg>
      </button>
      <button aria-label="网盘" className="ml-[12px]">
        <svg viewBox="0 0 16 16" className="size-[14px]" fill="none" strokeWidth="1.300"><rect width="16" height="16" rx="3" fill="#fff" /><circle cx="8" cy="5.500" r="2.500" stroke="#2f9be6" /><circle cx="5" cy="9.500" r="2.500" stroke="#3579d8" /><circle cx="11" cy="9.500" r="2.500" stroke="#e0526a" /></svg>
      </button>
      <button aria-label="浏览器" className="ml-[14px] mr-[8px]">
        <svg viewBox="0 0 16 16" className="size-[14px]" fill="none"><path d="M12.500 10.500A5 5 0 1 1 13 8H4" stroke="#55c1f1" strokeWidth="2.600" /><path d="M2 14C-1 12 8 1 14 2c1 1 1 2 0 3" stroke="#f3c944" strokeWidth="1.200" /></svg>
      </button>
      <TaskButton label="NX 12.0.2.9 - 加工" active>
        <svg viewBox="0 0 16 16" className="size-[14px] shrink-0"><path d="M2 6c0 8 10 9 12-2l2 1c-1 10-14 14-14 1z" fill="#38a1d1" /><path d="M9 11c3 0 5-2 5-5l2 1c0 5-4 8-7 7z" fill="#f4c53b" /><path d="M1 2l5-1 3 5-1-4 3 0 1 7-4 1-3-3v4l-3-2z" fill="#d53a37" /></svg>
      </TaskButton>
      <TaskButton label="可移动磁盘 (F:)">
        <svg viewBox="0 0 16 16" className="size-[14px] shrink-0"><path d="M1 11l7-4 7 2-1 3-7 3-6-2z" fill="#d6dadb" stroke="#777" strokeWidth=".5" /></svg>
      </TaskButton>
      <TaskButton label="14-5 定轴车铣加...">
        <svg viewBox="0 0 16 16" className="size-[14px] shrink-0"><path d="M4 2l5-1v13l-5 1z" fill="#f6dc82" /><path d="M8 1h4v12l-4 2z" fill="#e6b94c" /></svg>
      </TaskButton>
      <TaskButton label="软件管理 - 电脑...">
        <svg viewBox="0 0 16 16" className="size-[14px] shrink-0"><circle cx="8" cy="4.500" r="4" fill="#4eb847" /><circle cx="4.500" cy="8" r="4" fill="#397fe0" /><circle cx="11.500" cy="8" r="4" fill="#f4a229" /><circle cx="8" cy="11.500" r="4" fill="#e551b0" /><circle cx="8" cy="8" r="1.500" fill="#fff" /></svg>
      </TaskButton>
      <div className="flex flex-1 items-center justify-end gap-[5px] pr-[10px] text-white">
        <span className="text-[5px]">CH</span>
        <svg viewBox="0 0 12 8" className="w-[7px]"><path d="M1 1h10v6H1z" fill="#ddd" /></svg>
        <svg viewBox="0 0 6 6" className="w-[4px]"><path d="M0 5h6L3 1z" fill="#ddd" /></svg>
        <svg viewBox="0 0 10 10" className="w-[7px]"><path d="M1 3h2l3-3v10L3 7H1zM8 2q2 3 0 6" fill="#ddd" stroke="#ddd" strokeWidth=".6" /></svg>
        <svg viewBox="0 0 10 8" className="w-[7px]"><path d="M1 8V6h1v2zM3 8V4h2v4zM6 8V2h1v6zM8 8V0h2v8z" fill="#ddd" /></svg>
        <time className="flex flex-col items-center leading-[8px]"><span>22:01</span><span>2024/9/21</span></time>
      </div>
    </footer>
  );
}

export default function App() {
  return (
    <div className="relative flex h-screen flex-col overflow-hidden bg-white font-['Noto_Sans','Noto_Sans_CJK_SC',sans-serif] text-[#222]">
      <TitleBar />
      <TabBar />
      <Ribbon />
      <SelectionBar />
      <div className="flex min-h-0 flex-1">
        <ResourceBar />
        <Navigator />
        <Viewport />
      </div>
      <div className="h-[10px] shrink-0 border-t border-[#ccc] bg-white pr-[26px] text-center text-[5px] font-bold leading-[9px]">全部 1</div>
      <Taskbar />
      <div className="pointer-events-none absolute bottom-[10px] right-[10px] flex h-[46px] w-[124px] flex-col items-center justify-center whitespace-nowrap border-2 border-white/80 pt-[4px] font-bold text-white outline outline-[#aaa]/70 [text-shadow:0_0_2px_#666,0_0_1px_#666,1px_1px_1px_#777]">
        <span className="text-[14px] leading-[18px]">迅捷屏幕录像工具</span>
        <span className="font-['Liberation_Mono',monospace] text-[9px] leading-[12px]">www.xunjieshipin.com</span>
      </div>
    </div>
  );
}
